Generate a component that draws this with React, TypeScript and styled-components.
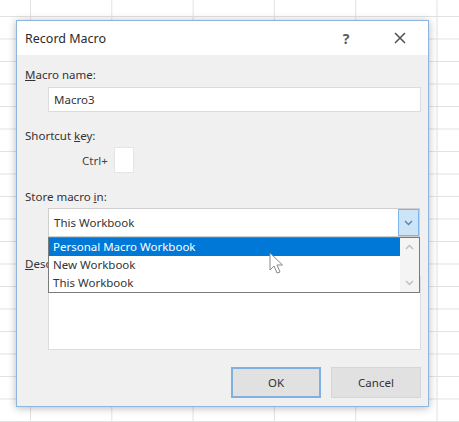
import React from "react";
import styled, { createGlobalStyle } from "styled-components";

const GlobalStyle = createGlobalStyle`
  html, body {
    margin: 0;
    padding: 0;
  }
  body {
    width: 459px;
    height: 422px;
    overflow: hidden;
    background-color: #fff;
    background-image:
      linear-gradient(to right, #e2e2e2 1px, transparent 1px),
      linear-gradient(to bottom, #e2e2e2 1px, transparent 1px);
    background-size: 81.3px 22.5px;
    background-position: 30px 16px;
    font-family: "Noto Sans", "Open Sans", sans-serif;
    color: #333;
  }
`;

const Page = styled.div`
  position: relative;
  box-sizing: border-box;
  width: 459px;
  height: 422px;
  padding: 20px 0 0 16px;
`;

const Dialog = styled.div`
  box-sizing: border-box;
  width: 413px;
  height: 387px;
  display: flex;
  flex-direction: column;
  background: #f0f0f0;
  border: 1px solid #8db5de;
  box-shadow: 0 1px 8px rgba(0, 0, 0, 0.28);
`;

const TitleBar = styled.div`
  height: 34px;
  display: flex;
  align-items: center;
  background: #fff;
  padding: 0 8px;
  gap: 14px;
`;

const Title = styled.div`
  flex: 1;
  font-size: 12.5px;
  color: #2b2b2b;
`;

const TitleButton = styled.div`
  width: 40px;
  height: 30px;
  display: flex;
  align-items: center;
  justify-content: center;
  color: #5a5a5a;
  font-size: 14px;
  font-weight: bold;
`;

const Body = styled.div`
  flex: 1;
  display: flex;
  flex-direction: column;
  padding: 12px 7px 8px 8px;
`;

const Label = styled.div<{ $gap?: number }>`
  height: 16px;
  line-height: 16px;
  font-size: 11.5px;
  color: #333;
  margin-top: ${(p) => p.$gap ?? 0}px;
`;

const U = styled.span`
  text-decoration: underline;
`;

const TextInput = styled.div`
  box-sizing: border-box;
  margin: 4px 0 0 23px;
  height: 25px;
  background: #fff;
  border: 1px solid #dcdcdc;
  padding-left: 5px;
  display: flex;
  align-items: center;
  font-size: 11.5px;
  color: #333;
`;

const KeyRow = styled.div`
  margin: 3px 0 0 57px;
  display: flex;
  align-items: center;
  gap: 6px;
  font-size: 11.5px;
  color: #444;
`;

const KeyBox = styled.div`
  width: 20px;
  height: 26px;
  background: #fff;
  border: 1px solid #e6e6e6;
  box-sizing: border-box;
`;

const SelectWrap = styled.div`
  position: relative;
  margin: 3px 1px 0 23px;
`;

const Select = styled.div`
  box-sizing: border-box;
  height: 29px;
  display: flex;
  align-items: center;
  background: #fff;
  border: 1px solid #cfcfcf;
  font-size: 11.5px;
  color: #333;
`;

const SelectText = styled.div`
  flex: 1;
  padding-left: 5px;
`;

const DropButton = styled.div`
  box-sizing: border-box;
  width: 21px;
  height: 100%;
  display: flex;
  align-items: center;
  justify-content: center;
  background: #cce4f7;
  border: 1px solid #7eb4ea;
`;

const List = styled.div`
  position: absolute;
  top: 100%;
  left: 0;
  right: 0;
  box-sizing: border-box;
  height: 56px;
  display: flex;
  background: #fff;
  border: 1px solid #7a7a7a;
  z-index: 2;
`;

const Items = styled.div`
  flex: 1;
  display: flex;
  flex-direction: column;
`;

const Item = styled.div<{ $active?: boolean }>`
  height: 18px;
  line-height: 18px;
  padding-left: 4px;
  font-size: 11.5px;
  color: ${(p) => (p.$active ? "#fff" : "#333")};
  background: ${(p) => (p.$active ? "#0078d7" : "transparent")};
`;

const ScrollBar = styled.div`
  width: 19px;
  display: flex;
  flex-direction: column;
  justify-content: space-between;
  align-items: center;
  padding: 6px 0;
  background: #f4f4f4;
`;

const TextArea = styled.div`
  box-sizing: border-box;
  margin: 4px 0 0 23px;
  height: 74px;
  background: #fff;
  border: 1px solid #dcdcdc;
`;

const Buttons = styled.div`
  margin-top: 17px;
  display: flex;
  justify-content: flex-end;
  gap: 10px;
`;

const Button = styled.div<{ $primary?: boolean }>`
  box-sizing: border-box;
  width: 90px;
  height: 31px;
  display: flex;
  align-items: center;
  justify-content: center;
  font-size: 11.5px;
  color: #333;
  background: #e1e1e1;
  border: ${(p) => (p.$primary ? "2px solid #7fb0e0" : "1px solid #d6d6d6")};
`;

const Cursor = styled.svg`
  position: absolute;
  left: 269px;
  top: 252px;
  z-index: 5;
`;

const Chevron = ({ up, color }: { up?: boolean; color: string }) => (
  <svg width="9" height="6" viewBox="0 0 9 6">
    <path
      d={up ? "M1 5 L4.5 1.5 L8 5" : "M1 1 L4.5 4.5 L8 1"}
      fill="none"
      stroke={color}
      strokeWidth="1.3"
    />
  </svg>
);

export default function App() {
  return (
    <>
      <GlobalStyle />
      <Page>
        <Dialog>
          <TitleBar>
            <Title>Record Macro</Title>
            <TitleButton>?</TitleButton>
            <TitleButton>
              <svg width="12" height="12" viewBox="0 0 12 12">
                <path
                  d="M1 1 L11 11 M11 1 L1 11"
                  stroke="#505050"
                  strokeWidth="1.5"
                />
              </svg>
            </TitleButton>
          </TitleBar>
          <Body>
            <Label>
              <U>M</U>acro name:
            </Label>
            <TextInput>Macro3</TextInput>
            <Label $gap={16}>
              Shortcut <U>k</U>ey:
            </Label>
            <KeyRow>
              Ctrl+
              <KeyBox />
            </KeyRow>
            <Label $gap={16}>
              Store macro <U>i</U>n:
            </Label>
            <SelectWrap>
              <Select>
                <SelectText>This Workbook</SelectText>
                <DropButton>
                  <Chevron color="#5b7fa6" />
                </DropButton>
              </Select>
              <List>
                <Items>
                  <Item $active>Personal Macro Workbook</Item>
                  <Item>New Workbook</Item>
                  <Item>This Workbook</Item>
                </Items>
                <ScrollBar>
                  <Chevron up color="#bdbdbd" />
                  <Chevron color="#bdbdbd" />
                </ScrollBar>
              </List>
            </SelectWrap>
            <Label $gap={19}>
              <U>D</U>escription:
            </Label>
            <TextArea />
            <Buttons>
              <Button $primary>OK</Button>
              <Button>Cancel</Button>
            </Buttons>
          </Body>
        </Dialog>
        <Cursor width="16" height="24" viewBox="0 0 16 24">
          <path
            d="M1 1 L1 18 L5 14 L8 21 L11 20 L8 13 L13.5 13 Z"
            fill="#fff"
            stroke="#8a8a8a"
            strokeWidth="1"
            strokeLinejoin="round"
          />
        </Cursor>
      </Page>
    </>
  );
}
